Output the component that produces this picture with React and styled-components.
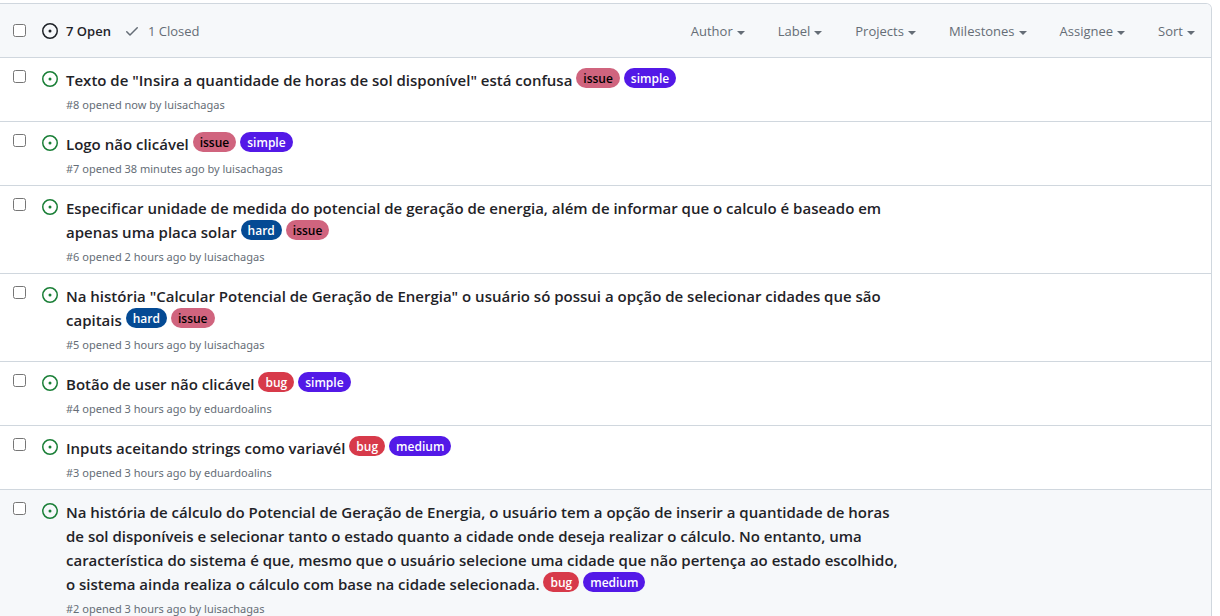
import React from "react";
import styled, { createGlobalStyle } from "styled-components";

const GlobalStyle = createGlobalStyle`
  * { box-sizing: border-box; }
  body {
    margin: 0;
    background: #ffffff;
    color: #1f2328;
    font-family: "Open Sans", "Noto Sans", sans-serif;
    font-size: 13px;
    line-height: 20px;
  }
`;

const Page = styled.main`
  padding: 3px 8px 0 0;
`;

const Box = styled.section`
  border: 1px solid #d0d7de;
  border-left: 0;
  border-radius: 0 6px 6px 0;
  overflow: hidden;
`;

const Header = styled.header`
  display: flex;
  align-items: flex-start;
  padding: 16px 0;
  background: #f6f8fa;
`;

const Checkbox = styled.input`
  flex: none;
  width: 13px;
  height: 13px;
  margin: 4px 16px 0 13px;
`;

const States = styled.nav`
  display: flex;
  flex: 1;
  gap: 13px;
  padding-top: 1px;
`;

const StateLink = styled.a`
  display: flex;
  align-items: center;
  gap: 8px;
  color: ${(p) => (p.$current ? "#1f2328" : "#656d76")};
  font-weight: ${(p) => (p.$current ? 600 : 400)};
  text-decoration: none;
`;

const Filters = styled.div`
  display: flex;
  gap: 1px;
  padding-top: 1px;
`;

const FilterButton = styled.button`
  display: flex;
  align-items: center;
  gap: 4px;
  padding: 0 16px;
  border: 0;
  background: none;
  color: #656d76;
  font: inherit;
`;

const Caret = styled.span`
  margin-top: 4px;
  border: 4px solid transparent;
  border-top-color: currentColor;
  border-bottom: 0;
`;

const List = styled.ul`
  margin: 0;
  padding: 0;
  list-style: none;
`;

const Row = styled.li`
  display: flex;
  align-items: flex-start;
  padding: 8px 0 7px;
  border-top: 1px solid #d0d7de;
  background: ${(p) => (p.$active ? "#f6f8fa" : "#ffffff")};
`;

const StatusIcon = styled.svg`
  flex: none;
  display: block;
  fill: ${(p) => p.$color};
`;

const RowIcon = styled.div`
  padding-top: 5px;
`;

const Content = styled.div`
  width: 70%;
  padding: 2px 0 0 8px;
`;

const TitleLine = styled.div`
  font-size: 15px;
  line-height: 24px;
`;

const Title = styled.a`
  color: #1f2328;
  font-weight: 600;
  text-decoration: none;
`;

const labelTones = {
  issue: { background: "#d0647e", color: "#000000" },
  simple: { background: "#5319e7", color: "#ffffff" },
  medium: { background: "#5319e7", color: "#ffffff" },
  hard: { background: "#044a94", color: "#ffffff" },
  bug: { background: "#d73a4a", color: "#ffffff" },
};

const Label = styled.a`
  display: inline-block;
  vertical-align: top;
  height: 20px;
  margin-right: 4px;
  padding: 2px 7px 0;
  border-radius: 10px;
  background: ${(p) => labelTones[p.$tone].background};
  color: ${(p) => labelTones[p.$tone].color};
  font-size: 12px;
  font-weight: 600;
  line-height: 18px;
  text-decoration: none;

  &:last-child {
    margin-right: 0;
  }
`;

const Meta = styled.div`
  margin-top: 4px;
  color: #656d76;
  font-family: "Noto Sans", sans-serif;
  font-size: 11px;
  line-height: 18px;
`;

const AuthorLink = styled.a`
  color: inherit;
  text-decoration: none;
`;

function OpenIcon({ color }) {
  return (
    <StatusIcon $color={color} width="16" height="16" viewBox="0 0 16 16" aria-hidden="true">
      <path d="M8 9.5a1.5 1.5 0 1 0 0-3 1.5 1.5 0 0 0 0 3Z" />
      <path d="M8 0a8 8 0 1 1 0 16A8 8 0 0 1 8 0ZM1.5 8a6.5 6.5 0 1 0 13 0 6.5 6.5 0 0 0-13 0Z" />
    </StatusIcon>
  );
}

function CheckIcon() {
  return (
    <StatusIcon $color="#656d76" width="16" height="16" viewBox="0 0 16 16" aria-hidden="true">
      <path d="M13.78 4.22a.75.75 0 0 1 0 1.06l-7.25 7.25a.75.75 0 0 1-1.06 0L2.22 9.28a.751.751 0 0 1 .018-1.042.751.751 0 0 1 1.042-.018L6 10.94l6.72-6.72a.75.75 0 0 1 1.06 0Z" />
    </StatusIcon>
  );
}

const filters = ["Author", "Label", "Projects", "Milestones", "Assignee", "Sort"];

const issues = [
  { id: 8, title: 'Texto de "Insira a quantidade de horas de sol disponível" está confusa', labels: ["issue", "simple"], when: "now", author: "luisachagas" },
  { id: 7, title: "Logo não clicável", labels: ["issue", "simple"], when: "38 minutes ago", author: "luisachagas" },
  { id: 6, title: "Especificar unidade de medida do potencial de geração de energia, além de informar que o calculo é baseado em apenas uma placa solar", labels: ["hard", "issue"], when: "2 hours ago", author: "luisachagas" },
  { id: 5, title: 'Na história "Calcular Potencial de Geração de Energia" o usuário só possui a opção de selecionar cidades que são capitais', labels: ["hard", "issue"], when: "3 hours ago", author: "luisachagas" },
  { id: 4, title: "Botão de user não clicável", labels: ["bug", "simple"], when: "3 hours ago", author: "eduardoalins" },
  { id: 3, title: "Inputs aceitando strings como variavél", labels: ["bug", "medium"], when: "3 hours ago", author: "eduardoalins" },
  { id: 2, title: "Na história de cálculo do Potencial de Geração de Energia, o usuário tem a opção de inserir a quantidade de horas de sol disponíveis e selecionar tanto o estado quanto a cidade onde deseja realizar o cálculo. No entanto, uma característica do sistema é que, mesmo que o usuário selecione uma cidade que não pertença ao estado escolhido, o sistema ainda realiza o cálculo com base na cidade selecionada.", labels: ["bug", "medium"], when: "3 hours ago", author: "luisachagas", active: true },
];

function IssueRow({ issue }) {
  return (
    <Row $active={issue.active}>
      <Checkbox type="checkbox" aria-labelledby={`issue-${issue.id}`} />
      <RowIcon>
        <OpenIcon color="#1a7f37" />
      </RowIcon>
      <Content>
        <TitleLine>
          <Title id={`issue-${issue.id}`} href={`#issue-${issue.id}`}>{issue.title}</Title>{" "}
          {issue.labels.map((name) => (
            <Label key={name} $tone={name} href={`#label-${name}`}>{name}</Label>
          ))}
        </TitleLine>
        <Meta>
          #{issue.id} opened {issue.when} by <AuthorLink href={`#${issue.author}`}>{issue.author}</AuthorLink>
        </Meta>
      </Content>
    </Row>
  );
}

export default function App() {
  return (
    <Page>
      <GlobalStyle />
      <Box>
        <Header>
          <Checkbox type="checkbox" aria-label="Select all issues" />
          <States>
            <StateLink $current href="#open"><OpenIcon color="#1f2328" />7 Open</StateLink>
            <StateLink href="#closed"><CheckIcon />1 Closed</StateLink>
          </States>
          <Filters>
            {filters.map((name) => (
              <FilterButton key={name} type="button">{name}<Caret /></FilterButton>
            ))}
          </Filters>
        </Header>
        <List>
          {issues.map((issue) => <IssueRow key={issue.id} issue={issue} />)}
        </List>
      </Box>
    </Page>
  );
}
